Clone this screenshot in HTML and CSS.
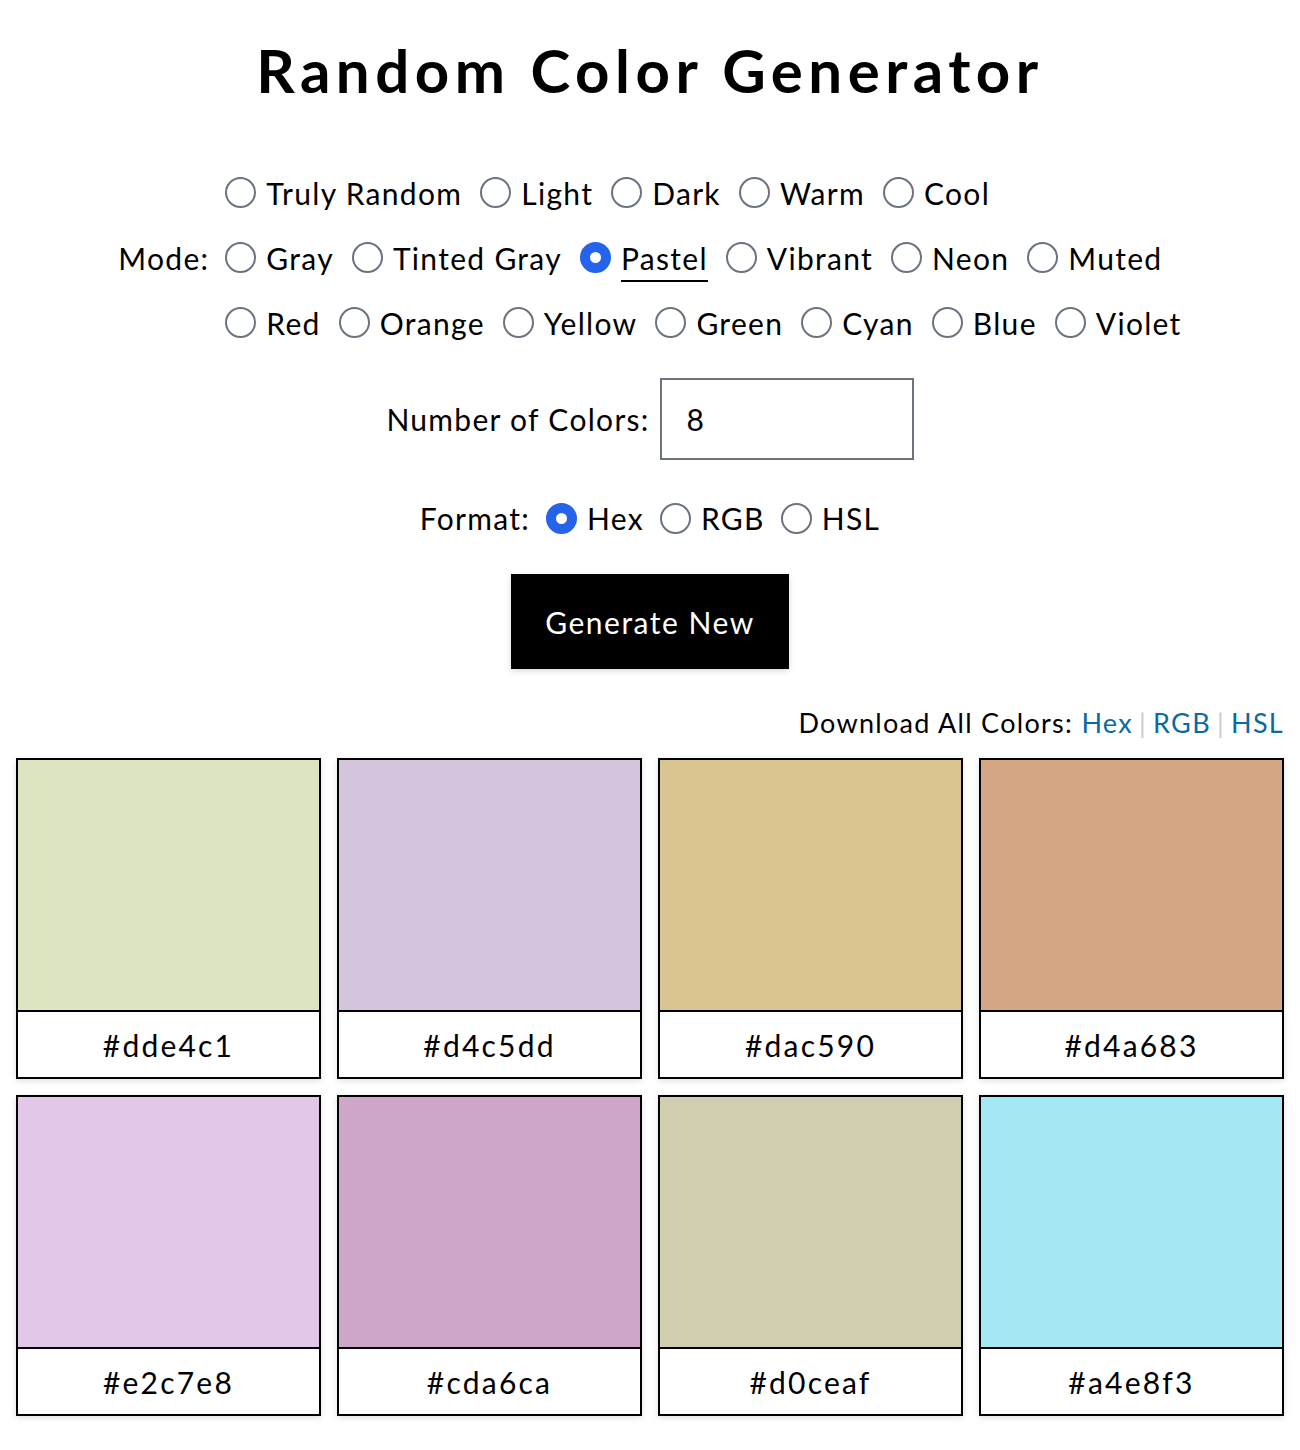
FILE: index.html
```html
<!DOCTYPE html>
<html lang="en">
<head>
<meta charset="utf-8">
<title>Random Color Generator</title>
<link rel="stylesheet" href="styles.css">
</head>
<body>
<main class="page">
  <h1 class="title">Random Color Generator</h1>

  <div class="mode">
    <span class="field-label">Mode:</span>
    <div class="mode-rows">
      <div class="radio-row">
        <label class="opt"><input type="radio" name="mode"><span>Truly Random</span></label>
        <label class="opt"><input type="radio" name="mode"><span>Light</span></label>
        <label class="opt"><input type="radio" name="mode"><span>Dark</span></label>
        <label class="opt"><input type="radio" name="mode"><span>Warm</span></label>
        <label class="opt"><input type="radio" name="mode"><span>Cool</span></label>
      </div>
      <div class="radio-row">
        <label class="opt"><input type="radio" name="mode"><span>Gray</span></label>
        <label class="opt"><input type="radio" name="mode"><span>Tinted Gray</span></label>
        <label class="opt"><input type="radio" name="mode" checked><span class="selected">Pastel</span></label>
        <label class="opt"><input type="radio" name="mode"><span>Vibrant</span></label>
        <label class="opt"><input type="radio" name="mode"><span>Neon</span></label>
        <label class="opt"><input type="radio" name="mode"><span>Muted</span></label>
      </div>
      <div class="radio-row">
        <label class="opt"><input type="radio" name="mode"><span>Red</span></label>
        <label class="opt"><input type="radio" name="mode"><span>Orange</span></label>
        <label class="opt"><input type="radio" name="mode"><span>Yellow</span></label>
        <label class="opt"><input type="radio" name="mode"><span>Green</span></label>
        <label class="opt"><input type="radio" name="mode"><span>Cyan</span></label>
        <label class="opt"><input type="radio" name="mode"><span>Blue</span></label>
        <label class="opt"><input type="radio" name="mode"><span>Violet</span></label>
      </div>
    </div>
  </div>

  <div class="count">
    <label class="field-label" for="num">Number of Colors:</label>
    <input id="num" class="num-input" type="text" value="8">
  </div>

  <div class="format">
    <span class="field-label">Format:</span>
    <label class="opt"><input type="radio" name="fmt" checked><span>Hex</span></label>
    <label class="opt"><input type="radio" name="fmt"><span>RGB</span></label>
    <label class="opt"><input type="radio" name="fmt"><span>HSL</span></label>
  </div>

  <div class="actions">
    <button class="generate" type="button">Generate New</button>
  </div>

  <div class="download">
    Download All Colors:
    <a href="#">Hex</a><span class="sep">|</span><a href="#">RGB</a><span class="sep">|</span><a href="#">HSL</a>
  </div>

  <div class="grid">
    <div class="card"><div class="swatch" style="background:#dde4c1"></div><div class="code">#dde4c1</div></div>
    <div class="card"><div class="swatch" style="background:#d4c5dd"></div><div class="code">#d4c5dd</div></div>
    <div class="card"><div class="swatch" style="background:#dac590"></div><div class="code">#dac590</div></div>
    <div class="card"><div class="swatch" style="background:#d4a683"></div><div class="code">#d4a683</div></div>
    <div class="card"><div class="swatch" style="background:#e2c7e8"></div><div class="code">#e2c7e8</div></div>
    <div class="card"><div class="swatch" style="background:#cda6ca"></div><div class="code">#cda6ca</div></div>
    <div class="card"><div class="swatch" style="background:#d0ceaf"></div><div class="code">#d0ceaf</div></div>
    <div class="card"><div class="swatch" style="background:#a4e8f3"></div><div class="code">#a4e8f3</div></div>
  </div>
</main>
</body>
</html>
```

FILE: styles.css
```css
* { box-sizing: border-box; }

html, body {
  margin: 0;
  padding: 0;
  background: #fff;
}

body {
  font-family: Lato, "Noto Sans", sans-serif;
  color: #000;
}

.page {
  padding: 0 16px 36px;
}

.title {
  margin: 0;
  padding-top: 32px;
  text-align: center;
  font-size: 60px;
  font-weight: 700;
  line-height: 76px;
  letter-spacing: 5.5px;
}

.mode {
  margin-top: 52px;
  display: flex;
  justify-content: center;
  align-items: center;
  gap: 16px;
}

.field-label {
  font-size: 30px;
  letter-spacing: 1.3px;
}

.mode-rows {
  display: flex;
  flex-direction: column;
}

.radio-row {
  display: flex;
  align-items: center;
  gap: 18px;
  height: 65px;
}

.opt {
  display: inline-flex;
  align-items: center;
  gap: 10px;
  font-size: 30px;
  letter-spacing: 1.3px;
  cursor: pointer;
}

.opt input {
  appearance: none;
  -webkit-appearance: none;
  margin: 0;
  width: 31px;
  height: 31px;
  border: 2px solid #6b7280;
  border-radius: 50%;
  background: #fff;
  flex: none;
}

.opt input:checked {
  border: 10px solid #2563eb;
  background: #fff;
}

.selected {
  border-bottom: 2px solid #000;
  padding-bottom: 4px;
  margin-bottom: -6px;
}

.count {
  margin-top: 23px;
  display: flex;
  justify-content: center;
  align-items: center;
  gap: 10px;
}

.num-input {
  width: 254px;
  height: 82px;
  border: 2px solid #6b7280;
  padding: 0 25px;
  font-family: inherit;
  font-size: 30px;
  color: #000;
  background: #fff;
  border-radius: 0;
  outline: none;
}

.format {
  margin-top: 23px;
  display: flex;
  justify-content: center;
  align-items: center;
  gap: 16px;
  height: 70px;
}

.actions {
  margin-top: 21px;
  display: flex;
  justify-content: center;
}

.generate {
  width: 278px;
  height: 95px;
  background: #000;
  color: #fff;
  border: none;
  font-family: inherit;
  font-size: 30px;
  letter-spacing: 1.5px;
  box-shadow: 0 2px 6px rgba(0, 0, 0, 0.15);
  cursor: pointer;
}

.download {
  margin-top: 36px;
  text-align: right;
  font-size: 27px;
  letter-spacing: 1.3px;
  line-height: 36px;
}

.download a {
  color: #0a6aa1;
  text-decoration: none;
}

.sep {
  color: #c8ccd4;
  margin: 0 6px;
}

.grid {
  margin-top: 17px;
  display: grid;
  grid-template-columns: repeat(4, 1fr);
  gap: 16px;
}

.card {
  border: 2px solid #000;
  box-shadow: 0 2px 6px rgba(0, 0, 0, 0.12);
  display: flex;
  flex-direction: column;
}

.swatch {
  height: 252px;
  border-bottom: 2px solid #000;
}

.code {
  height: 65px;
  display: flex;
  align-items: center;
  justify-content: center;
  font-size: 30px;
  letter-spacing: 2.2px;
}
```
